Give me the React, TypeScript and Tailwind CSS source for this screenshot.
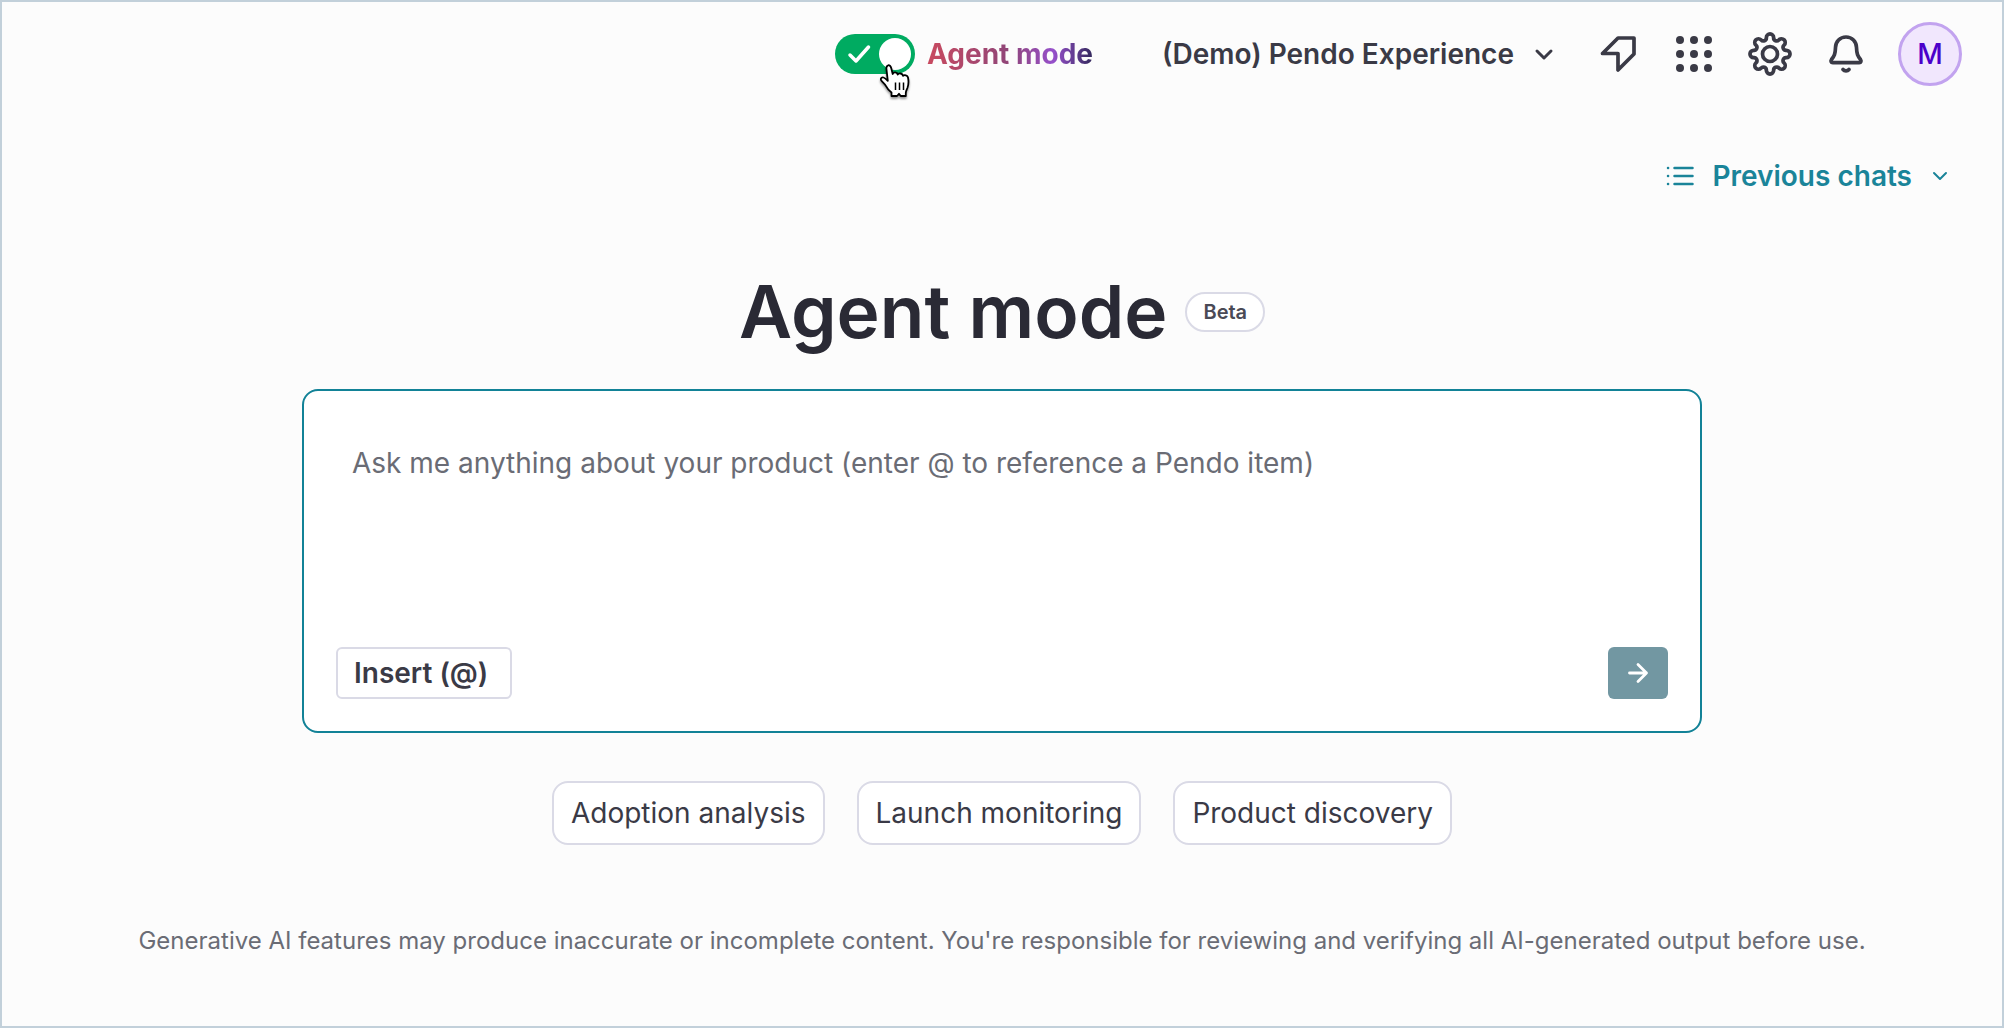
import { ReactNode, useState } from "react";

const suggestions = ["Adoption analysis", "Launch monitoring", "Product discovery"];

function gearOutline() {
  const toothDistance = 16.5;
  const toothRadius = 3.6;
  const valleyDistance = 17.6;
  const valleyRadius = 3;
  const step = Math.PI / 4;
  const point = (distance: number, angle: number) => [24 + distance * Math.sin(angle), 24 - distance * Math.cos(angle)];
  const ratio = toothRadius / (toothRadius + valleyRadius);
  const tangent = (tooth: number[], valley: number[]) =>
    tooth.map((value, axis) => (value + (valley[axis] - value) * ratio).toFixed(2)).join(" ");

  let path = "";
  for (let i = 0; i < 8; i++) {
    const angle = i * step;
    const tooth = point(toothDistance, angle);
    const before = tangent(tooth, point(valleyDistance, angle - step / 2));
    const after = tangent(tooth, point(valleyDistance, angle + step / 2));
    path += i === 0 ? `M${before}` : `A${valleyRadius} ${valleyRadius} 0 0 0 ${before}`;
    path += `A${toothRadius} ${toothRadius} 0 0 1 ${after}`;
  }
  const first = tangent(point(toothDistance, 0), point(valleyDistance, -step / 2));
  return `${path}A${valleyRadius} ${valleyRadius} 0 0 0 ${first}Z`;
}

const gearPath = gearOutline();

type IconButtonProps = {
  label: string;
  children: ReactNode;
};

function IconButton({ label, children }: IconButtonProps) {
  return (
    <button type="button" aria-label={label} className="size-12 shrink-0 text-[#3a3a46]">
      <svg viewBox="0 0 48 48" fill="none" stroke="currentColor" strokeWidth="3.7" strokeLinecap="round" strokeLinejoin="round">
        {children}
      </svg>
    </button>
  );
}

function HandCursor() {
  return (
    <svg
      viewBox="0 0 34 38"
      aria-hidden="true"
      className="pointer-events-none absolute top-[29px] left-11 h-[38px] w-[34px] drop-shadow-[0_2px_1px_rgba(0,0,0,0.4)]"
    >
      <path
        d="M12.5 33v-3.5c-2.500-1.800-4-3.700-5.300-6.200C6 21 4.600 20 2.800 18.200c-1.800-1.800-.8-4.400 1.700-3.700 1.500.4 2.700 1.600 4.300 3.300L7.500 6.500C6.700 1.500 11.200.7 12.200 5l1.500 6c.8-2.300 4.500-2 5 .6.900-1.800 4.800-1.500 5.300 1.200 1.400-1.200 4.500-.6 5 1.700.7 3.500.8 7-.6 10.500-.9 2-1.600 3-1.600 5V33h-5.100l-1.700-2.200-2 2.200z"
        fill="#fff"
        stroke="#000"
        strokeWidth="1.8"
        strokeLinejoin="round"
      />
      <path d="M16.500 19.500v7.500M20.500 19.500v7.500M24.500 19.500v7.500" stroke="#000" strokeWidth="1.500" />
    </svg>
  );
}

function AgentToggle() {
  const [enabled, setEnabled] = useState(true);
  return (
    <label className="relative flex cursor-pointer items-center gap-3">
      <input
        type="checkbox"
        role="switch"
        className="peer sr-only"
        checked={enabled}
        onChange={(event) => setEnabled(event.target.checked)}
      />
      <span className="flex h-10 w-20 items-center justify-between rounded-full bg-gray-400 pr-1 pl-3 peer-checked:bg-[#00ab61]">
        <svg viewBox="0 0 24 24" fill="none" stroke="#fff" strokeWidth="3.500" strokeLinecap="round" strokeLinejoin="round" className="size-6">
          <path d="M3 13l6 6L21.500 5" />
        </svg>
        <span className="size-8 rounded-full bg-white" />
      </span>
      <span className="bg-[linear-gradient(90deg,#c94a5f_0%,#8f4579_50%,#9650cb_76%,#33295c_100%)] bg-clip-text text-[28px] leading-9 font-bold text-transparent">
        Agent mode
      </span>
      <HandCursor />
    </label>
  );
}

function TopBar() {
  return (
    <header className="flex h-[104px] items-center justify-end pr-10">
      <AgentToggle />
      <button type="button" className="ml-[69px] flex items-center gap-[18px] text-[28px] leading-9 font-semibold text-[#3a3a46]">
        (Demo) Pendo Experience
        <svg viewBox="0 0 24 24" fill="none" stroke="currentColor" strokeWidth="3" strokeLinecap="round" strokeLinejoin="round" className="size-6">
          <path d="M5 9l7 7 7-7" />
        </svg>
      </button>
      <nav className="ml-[38px] flex items-center gap-7">
        <IconButton label="Guides">
          <path d="M8.500 23.500L24 8h16v16L24 40V23.500z" />
        </IconButton>
        <IconButton label="Apps">
          <g fill="currentColor" stroke="none">
            {[10, 24, 38].map((y) => [10, 24, 38].map((x) => <circle key={`${x}-${y}`} cx={x} cy={y} r="4" />))}
          </g>
        </IconButton>
        <IconButton label="Settings">
          <path d={gearPath} />
          <circle cx="24" cy="24" r="7.500" />
        </IconButton>
        <IconButton label="Notifications">
          <path d="M24 7c-6 0-10.300 4.500-10.500 10.500-.2 6.500-1.200 8.500-4 12-1 1.400-.5 3.200 1.300 3.200h26.400c1.800 0 2.300-1.800 1.300-3.200-2.800-3.500-3.800-5.500-4-12C34.300 11.500 30 7 24 7z" />
          <path d="M21 39.500c1.500 1.800 4.500 1.800 6 0" />
        </IconButton>
        <button
          type="button"
          aria-label="Account"
          className="flex size-16 items-center justify-center rounded-full border-3 border-[#c2a3ef] bg-[#f1e7fd] text-[28px] leading-9 font-medium text-[#4b00ca]"
        >
          M
        </button>
      </nav>
    </header>
  );
}

function PromptBox() {
  const [prompt, setPrompt] = useState("");
  return (
    <form
      onSubmit={(event) => event.preventDefault()}
      className="flex w-full max-w-[1400px] flex-col rounded-2xl border-2 border-[#128297] bg-white px-8 pt-12 pb-8"
    >
      <textarea
        aria-label="Prompt"
        value={prompt}
        onChange={(event) => setPrompt(event.target.value)}
        placeholder="Ask me anything about your product (enter @ to reference a Pendo item)"
        className="h-52 resize-none px-4 pt-1 text-[28px] leading-10 text-[#2a2a35] outline-none placeholder:text-[#6a6c75]"
      />
      <div className="flex items-center justify-between">
        <button type="button" className="h-[52px] rounded-md border-2 border-[#dadae6] pr-[22px] pl-4 text-[28px] leading-9 font-semibold text-[#3a3a46]">
          Insert (@)
        </button>
        <button type="submit" aria-label="Send" className="flex h-[52px] w-[60px] items-center justify-center rounded-md bg-[#7297a2] text-white">
          <svg viewBox="0 0 24 24" fill="none" stroke="currentColor" strokeWidth="2.800" strokeLinecap="round" strokeLinejoin="round" className="size-6">
            <path d="M3.500 12h17M12 3.500l8.500 8.500-8.500 8.500" />
          </svg>
        </button>
      </div>
    </form>
  );
}

export default function App() {
  return (
    <div className="flex min-h-screen flex-col border-2 border-[#c2d0da] bg-[#fcfcfc] font-['Inter',sans-serif]">
      <TopBar />
      <div className="mt-[50px] flex justify-end pr-[54px]">
        <button type="button" className="flex h-10 items-center text-[28px] leading-9 font-semibold text-[#1a8499]">
          <svg viewBox="0 0 28 24" fill="none" stroke="currentColor" strokeWidth="2.500" strokeLinecap="round" className="mr-[18px] h-6 w-7">
            <path d="M8.500 4h18M8.500 12h18M8.500 20h18M2 4h.1M2 12h.1M2 20h.1" />
          </svg>
          Previous chats
          <svg viewBox="0 0 16 16" fill="none" stroke="currentColor" strokeWidth="2" strokeLinecap="round" strokeLinejoin="round" className="ml-5 size-4">
            <path d="M2 5l6 6 6-6" />
          </svg>
        </button>
      </div>
      <main className="flex flex-1 flex-col items-center px-6">
        <div className="mt-[66px] flex items-center gap-[18px]">
          <h1 className="text-[73px] leading-[100px] font-semibold text-[#2a2a35]">Agent mode</h1>
          <span className="flex h-10 items-center rounded-full border-2 border-[#dadae6] bg-white px-4 text-xl font-semibold text-[#4a4a56]">
            Beta
          </span>
        </div>
        <div className="mt-[27px] flex w-full justify-center">
          <PromptBox />
        </div>
        <div className="mt-12 flex flex-wrap justify-center gap-8">
          {suggestions.map((suggestion) => (
            <button
              key={suggestion}
              type="button"
              className="h-16 rounded-2xl border-2 border-[#dadae6] bg-white px-[17px] text-[28px] leading-9 text-[#3a3a46]"
            >
              {suggestion}
            </button>
          ))}
        </div>
        <p className="mt-20 pb-6 text-center text-2xl text-[#6a6c75]">
          Generative AI features may produce inaccurate or incomplete content. You're responsible for reviewing and verifying all
          AI-generated output before use.
        </p>
      </main>
    </div>
  );
}
